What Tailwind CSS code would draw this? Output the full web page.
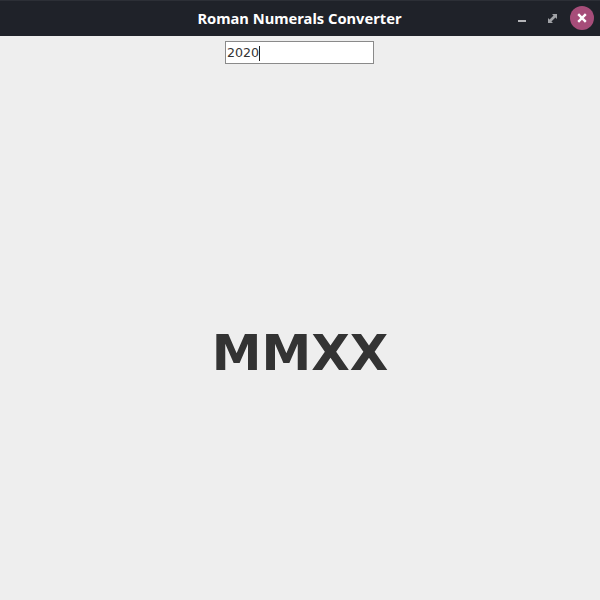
<!DOCTYPE html>
<html lang="en">
  <head>
    <meta charset="UTF-8" />
    <meta name="viewport" content="width=device-width, initial-scale=1.0" />
    <script src="https://cdn.jsdelivr.net/npm/@tailwindcss/browser@4"></script>
    <title>Roman Numerals Converter</title>
  </head>
  <body class="bg-[#eeeeee] h-[600px] w-[600px] overflow-hidden flex flex-col">
    <!-- Title bar -->
    <div class="h-9 shrink-0 bg-[#1f2229] border-t border-[#2c2f36] flex items-center relative">
      <div class="w-full text-center text-white font-bold text-[14.7px] pr-[1px] font-['Noto_Sans',sans-serif]">
        Roman Numerals Converter
      </div>
      <div class="absolute right-[6px] top-[5px] flex items-center">
        <svg width="24" height="24" viewBox="0 0 24 24" class="mr-[6px]">
          <rect x="8" y="14" width="8" height="2" fill="#b4b5b8" />
        </svg>
        <svg width="24" height="24" viewBox="0 0 24 24" class="mr-[6px]">
          <path d="M12 8h5v5zM8 12v5h5z" fill="#a0a2a6" />
          <path d="M10 15l5-5" stroke="#a0a2a6" stroke-width="2.6" />
        </svg>
        <div class="w-6 h-6 rounded-full bg-[#a64d79] flex items-center justify-center">
          <svg width="10" height="10" viewBox="0 0 10 10">
            <path d="M1.2 1.2l7.6 7.6M8.8 1.2l-7.6 7.6" stroke="#ffffff" stroke-width="2.4" />
          </svg>
        </div>
      </div>
    </div>

    <!-- Input -->
    <div class="flex justify-center pt-[5px] pr-[2px]">
      <div class="w-[149px] h-[23px] bg-white border border-[#8a8a8a] flex items-center pl-[1.5px] pt-[1px] text-[12.6px] text-[#333333] font-['DejaVu_Sans',sans-serif]">
        <span>2020</span><span class="w-px h-[15px] bg-[#222222]"></span>
      </div>
    </div>

    <!-- Result -->
    <div class="flex-1 flex items-center justify-center pt-[41px]">
      <div class="font-bold text-[50px] leading-none text-[#333333] font-['DejaVu_Sans',sans-serif]">MMXX</div>
    </div>
  </body>
</html>
